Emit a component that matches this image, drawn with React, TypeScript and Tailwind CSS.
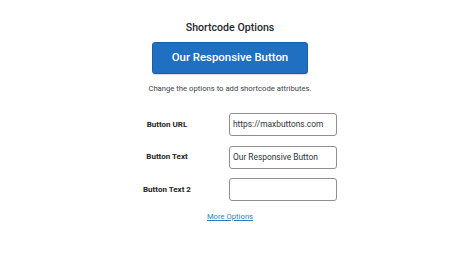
import React from "react";

export default function App() {
  const rows = [
    { label: "Button URL", value: "https://maxbuttons.com" },
    { label: "Button Text", value: "Our Responsive Button" },
    { label: "Button Text 2", value: "" },
  ];
  return (
    <div className="w-[474px] h-[259px] bg-white">
      <div className="w-[460px] flex flex-col items-center" style={{ fontFamily: "Roboto, 'Liberation Sans', sans-serif" }}>
        <div className="mt-[21px] h-[14px] leading-[14px] text-[10.6px] font-medium text-[#23282d]">Shortcode Options</div>
        <div className="mt-[7px] w-[156px] h-[32px] rounded-[3px] bg-[#1f6fc2] border border-[#1a5fa6] flex items-center justify-center text-white text-[11.4px] font-medium shadow-[0_1px_1px_rgba(0,0,0,0.15)]">
          Our Responsive Button
        </div>
        <div className="mt-[9px] h-[12px] leading-[12px] text-[7.7px] text-[#3c434a]">Change the options to add shortcode attributes.</div>
        <div className="mt-[18px] ml-[4px] w-[210px] flex flex-col gap-[9.5px]">
          {rows.map((r) => (
            <div key={r.label} className="flex items-center h-[23px]">
              <div className="w-[80px] text-center text-[8px] font-bold text-[#1d2327]">{r.label}</div>
              <div className="ml-[22px] w-[108px] h-[23px] rounded-[3px] border border-[#8c8f94] bg-white flex items-center px-[3px] text-[8.4px] text-[#2c3338] whitespace-nowrap overflow-hidden">
                {r.value}
              </div>
            </div>
          ))}
        </div>
        <a href="#" className="mt-[10px] text-[7.7px] text-[#2e7fc0] underline leading-[12px]">More Options</a>
      </div>
    </div>
  );
}
